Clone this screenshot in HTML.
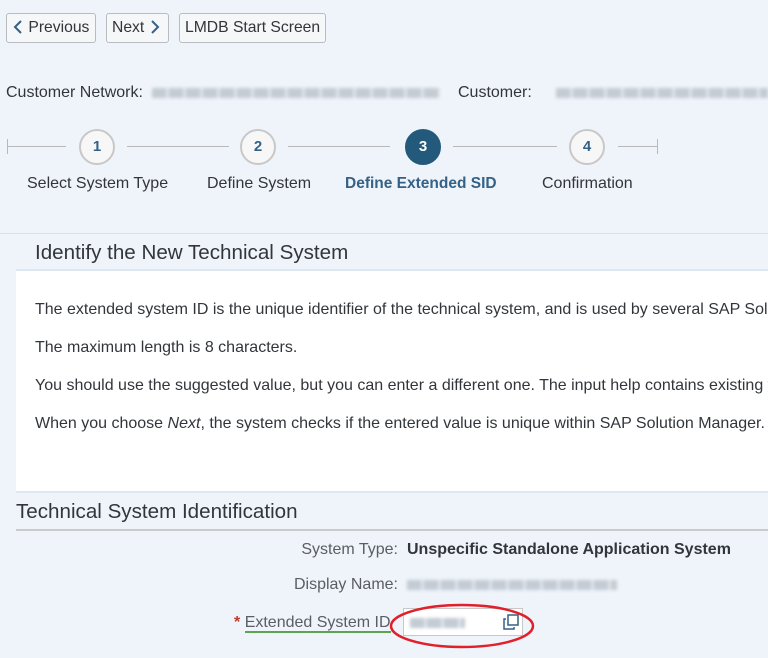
<!DOCTYPE html>
<html><head><style>
*{margin:0;padding:0;box-sizing:border-box}
html,body{width:768px;height:658px;overflow:hidden}
body{background:#eff4fa;font-family:"Liberation Sans",Arial,sans-serif;color:#32363a;position:relative}
#w{position:absolute;left:0;top:0;width:768px;height:658px;overflow:hidden}
.a{position:absolute;white-space:nowrap}
.btn{position:absolute;top:13px;height:30px;border:1px solid #b8bcc0;border-radius:3px;background:#f5f7f9;font-size:15.7px;color:#32363a;line-height:28px;padding:0 5px;white-space:nowrap}
.circ{position:absolute;top:129px;width:36px;height:36px;border-radius:50%;border:2px solid #c8c8c8;background:#f7f7f7;text-align:center;line-height:32px;font-weight:bold;font-size:15px;color:#346187}
.ln{position:absolute;top:146px;height:1px;background:#b8b8b8}
.lbl{position:absolute;top:175px;font-size:16px;color:#32363a;white-space:nowrap}
.blur{position:absolute;height:10px;background:repeating-linear-gradient(90deg,#c4cbd4 0 14px,#dfe4ea 14px 17px);filter:blur(1.5px)}
p.t{position:absolute;left:35px;width:733px;overflow:hidden;font-size:16px;white-space:nowrap;color:#32363a}
.r{position:absolute;right:370px;font-size:16px;color:#5a5e62;white-space:nowrap}
</style></head><body><div id="w">
<div class="btn" style="left:6px;width:90px"><svg width="12" height="14" style="vertical-align:-2px"><path d="M9 1 L3 7 L9 13" stroke="#346187" stroke-width="2" fill="none"/></svg> Previous</div>
<div class="btn" style="left:106px;width:63px">Next <svg width="12" height="14" style="vertical-align:-2px"><path d="M3 1 L9 7 L3 13" stroke="#346187" stroke-width="2" fill="none"/></svg></div>
<div class="btn" style="left:179px;width:147px">LMDB Start Screen</div>

<div class="a" style="left:6px;top:84px;font-size:16px">Customer Network:</div>
<div class="blur" style="left:152px;top:88px;width:288px"></div>
<div class="a" style="left:458px;top:84px;font-size:16px">Customer:</div>
<div class="blur" style="left:556px;top:88px;width:212px"></div>

<div style="position:absolute;left:7px;top:139px;width:1px;height:15px;background:#b8b8b8"></div>
<div class="ln" style="left:7px;width:59px"></div>
<div class="ln" style="left:127px;width:102px"></div>
<div class="ln" style="left:288px;width:102px"></div>
<div class="ln" style="left:453px;width:104px"></div>
<div class="ln" style="left:618px;width:40px"></div>
<div style="position:absolute;left:657px;top:139px;width:1px;height:15px;background:#b8b8b8"></div>
<div class="circ" style="left:79px">1</div>
<div class="circ" style="left:240px">2</div>
<div class="circ" style="left:405px;background:#235a7c;border-color:#235a7c;color:#fff">3</div>
<div class="circ" style="left:569px">4</div>
<div class="lbl" style="left:27px">Select System Type</div>
<div class="lbl" style="left:207px">Define System</div>
<div class="lbl" style="left:345px;font-weight:bold;color:#346187;font-size:15.5px">Define Extended SID</div>
<div class="lbl" style="left:542px">Confirmation</div>

<div style="position:absolute;left:0;top:233px;width:768px;height:1px;background:#d6e2ee"></div>
<div class="a" style="left:35px;top:241px;font-size:20.6px;color:#32363a">Identify the New Technical System</div>
<div style="position:absolute;left:16px;top:269px;width:752px;height:224px;background:#fff;border-top:2px solid #dce7f1;border-bottom:2px solid #dce7f1"></div>
<p class="t" style="top:301px">The extended system ID is the unique identifier of the technical system, and is used by several SAP Solution Manager applications.</p>
<p class="t" style="top:339px">The maximum length is 8 characters.</p>
<p class="t" style="top:377px">You should use the suggested value, but you can enter a different one. The input help contains existing values.</p>
<p class="t" style="top:415px">When you choose <i>Next</i>, the system checks if the entered value is unique within SAP Solution Manager.</p>

<div class="a" style="left:16px;top:500px;font-size:20.6px">Technical System Identification</div>
<div style="position:absolute;left:16px;top:529px;width:752px;height:2px;background:#c8cacc"></div>

<div class="r" style="top:541px">System Type:</div>
<div class="a" style="left:407px;top:541px;font-size:16px;font-weight:bold">Unspecific Standalone Application System</div>
<div class="r" style="top:576px">Display Name:</div>
<div class="blur" style="left:407px;top:580px;width:210px"></div>
<div class="a" style="left:234px;top:614px;font-size:16px;color:#5a5e62"><span style="color:#c0392b;font-weight:bold">*</span> <span style="border-bottom:2px solid #5aa454">Extended System ID</span></div>
<div style="position:absolute;left:403px;top:608px;width:120px;height:28px;background:#fff;border:1px solid #c8c8c8"></div>
<div class="blur" style="left:410px;top:618px;width:55px"></div>
<svg style="position:absolute;left:502px;top:613px" width="18" height="18"><rect x="6" y="2" width="10" height="10" fill="none" stroke="#346187" stroke-width="1.5"/><path d="M4 6 H2 V16 H12 V14" fill="none" stroke="#346187" stroke-width="1.5"/></svg>
<svg style="position:absolute;left:388px;top:600px" width="150" height="52"><ellipse cx="74" cy="26" rx="71" ry="21" fill="none" stroke="#e0202a" stroke-width="2.5"/></svg>
</div></body></html>
